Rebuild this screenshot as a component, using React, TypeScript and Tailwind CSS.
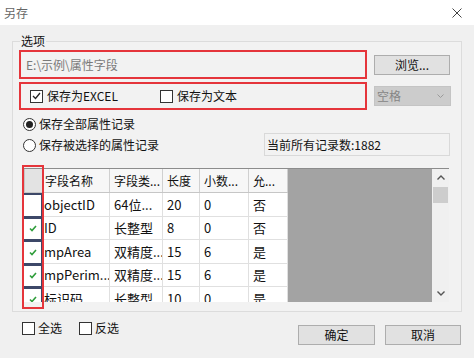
import React from "react";

const font = { fontFamily: '"Noto Sans CJK SC", "Noto Sans", sans-serif' };

const rows = [
  { sel: false, name: "objectID", type: "64位...", len: "20", dec: "0", allow: "否" },
  { sel: true, name: "ID", type: "长整型", len: "8", dec: "0", allow: "否" },
  { sel: true, name: "mpArea", type: "双精度...", len: "15", dec: "6", allow: "是" },
  { sel: true, name: "mpPerim...", type: "双精度...", len: "15", dec: "6", allow: "是" },
  { sel: true, name: "标识码", type: "长整型", len: "10", dec: "0", allow: "是" }
];

const CheckBox = ({ checked }: { checked?: boolean }) => (
  <span className="w-[13px] h-[13px] border border-[#333333] bg-white flex items-center justify-center shrink-0">
    {checked && (
      <svg width="9" height="8" viewBox="0 0 9 8">
        <path d="M1 4 L3.5 6.5 L8 1" fill="none" stroke="#222" strokeWidth="1.3" />
      </svg>
    )}
  </span>
);

const Radio = ({ on }: { on?: boolean }) => (
  <span className="w-[13px] h-[13px] rounded-full border border-[#333333] bg-white flex items-center justify-center shrink-0">
    {on && <span className="w-[7px] h-[7px] rounded-full bg-[#222222]" />}
  </span>
);

const GreenTick = () => (
  <svg width="8" height="7" viewBox="0 0 8 7">
    <path d="M1 3.5 L3 5.5 L7 1" fill="none" stroke="#2e9d3a" strokeWidth="1.6" />
  </svg>
);

const cols = ["w-[67px]", "w-[53px]", "w-[37px]", "w-[49px]", "w-[39px]"];

export default function App() {
  return (
    <div className="w-[474px] h-[358px] bg-[#f0f0f0] overflow-hidden text-[12px] text-[#111]" style={font}>
      {/* title bar */}
      <div className="h-[25px] bg-white flex items-center justify-between pl-[4px] pr-[12px]">
        <span className="text-[#666666] text-[12px]">另存</span>
        <svg width="10" height="10" viewBox="0 0 10 10">
          <path d="M0.5 0.5 L9.5 9.5 M9.5 0.5 L0.5 9.5" stroke="#444" strokeWidth="1" />
        </svg>
      </div>

      <fieldset className="mt-[9px] ml-[12px] w-[450px] h-[278px] border border-[#dcdcdc] bg-[#f2f2f2]">
        <legend className="ml-[7px] px-[1px] leading-[14px] text-[12px]">选项</legend>

        {/* path row */}
        <div className="flex items-center mt-[2px] ml-[6px]">
          <div className="w-[348px] h-[29px] border-2 border-[#e5353b] flex items-center pl-[5px] text-[#7a7a7a]">
            E:\示例\属性字段
          </div>
          <div className="ml-[7px] w-[76px] h-[20px] bg-[#e1e1e1] border border-[#adadad] flex items-center justify-center">
            浏览...
          </div>
        </div>

        {/* format row */}
        <div className="flex items-center mt-[3px] ml-[6px]">
          <div className="w-[348px] h-[28px] border-2 border-[#e5353b] flex items-center pl-[9px]">
            <label className="flex items-center gap-[4px] w-[130px]">
              <CheckBox checked />
              <span>保存为EXCEL</span>
            </label>
            <label className="flex items-center gap-[4px]">
              <CheckBox />
              <span>保存为文本</span>
            </label>
          </div>
          <div className="ml-[7px] w-[77px] h-[20px] bg-[#cccccc] border border-[#c4c4c4] flex items-center justify-between pl-[2px] pr-[6px] text-[#858585]">
            <span>空格</span>
            <svg width="7" height="4" viewBox="0 0 7 4">
              <path d="M0.5 0.5 L3.5 3.5 L6.5 0.5" fill="none" stroke="#9a9a9a" strokeWidth="1" />
            </svg>
          </div>
        </div>

        {/* radios and count */}
        <div className="flex mt-[4px]">
          <div className="flex flex-col gap-[1px] ml-[10px]">
            <label className="h-[20px] flex items-center gap-[3px]">
              <Radio on />
              <span>保存全部属性记录</span>
            </label>
            <label className="h-[20px] flex items-center gap-[3px]">
              <Radio />
              <span>保存被选择的属性记录</span>
            </label>
          </div>
          <div className="ml-auto mr-[11px] mt-[19px] w-[186px] h-[23px] border border-[#d9d9d9] flex items-center pl-[2px]">
            当前所有记录数:1882
          </div>
        </div>

        {/* table */}
        <div className="relative mt-[12px] ml-[11px] w-[425px]">
          <div className="w-[425px] h-[134px] flex border-t border-[#8c8c8c] overflow-hidden">
            <div className="flex flex-col bg-white">
              <div className="flex h-[24px] shrink-0 bg-[#f7f7f7] border-b border-[#c6c6c6]">
                <div className="w-[19px] bg-[#e3e3e3] border-r border-[#c6c6c6] border-l border-l-[#c6c6c6]" />
                {["字段名称", "字段类...", "长度", "小数...", "允..."].map((h, i) => (
                  <div key={h} className={`${cols[i]} border-r border-[#d0d0d0] flex items-center ${i === 0 ? "pl-[2px]" : "pl-[4px]"}`}>
                    {h}
                  </div>
                ))}
              </div>
              {rows.map((r) => (
                <div key={r.name} className="flex h-[23.5px] shrink-0">
                  <div className="w-[19px] bg-white border-t-2 border-b border-r-2 border-[#3d4868] flex items-center pl-[5px]">
                    {r.sel && <GreenTick />}
                  </div>
                  {[r.name, r.type, r.len, r.dec, r.allow].map((v, i) => (
                    <div
                      key={i}
                      className={`${cols[i]} border-r border-b border-[#e0e0e0] flex items-center overflow-hidden whitespace-nowrap text-[13px] ${i === 0 ? "pl-[1px]" : "pl-[4px]"}`}
                    >
                      {v}
                    </div>
                  ))}
                </div>
              ))}
            </div>
            <div className="w-[144px] bg-[#a3a3a3]" />
            <div className="w-[17px] bg-[#f0f0f0] flex flex-col items-center">
              <div className="h-[17px] flex items-center justify-center">
                <svg width="8" height="5" viewBox="0 0 8 5">
                  <path d="M0.5 4.5 L4 1 L7.5 4.5" fill="none" stroke="#555" strokeWidth="1.4" />
                </svg>
              </div>
              <div className="w-[15px] h-[16px] mt-[1px] bg-[#cdcdcd]" />
              <div className="mt-auto h-[17px] flex items-center justify-center">
                <svg width="8" height="5" viewBox="0 0 8 5">
                  <path d="M0.5 0.5 L4 4 L7.5 0.5" fill="none" stroke="#555" strokeWidth="1.4" />
                </svg>
              </div>
            </div>
          </div>
          <div className="absolute left-[-2px] top-[-3px] w-[22px] h-[144px] border-2 border-[#e5353b] pointer-events-none" />
        </div>
      </fieldset>

      {/* bottom */}
      <div className="flex items-start">
        <div className="flex items-center mt-[7px] ml-[22px] gap-[17px]">
          <label className="flex items-center gap-[3px]">
            <CheckBox />
            <span>全选</span>
          </label>
          <label className="flex items-center gap-[3px]">
            <CheckBox />
            <span>反选</span>
          </label>
        </div>
        <div className="ml-auto mr-[13px] mt-[13px] flex gap-[10px]">
          <div className="w-[77px] h-[20px] bg-[#e1e1e1] border border-[#adadad] flex items-center justify-center">确定</div>
          <div className="w-[76px] h-[20px] bg-[#e1e1e1] border border-[#adadad] flex items-center justify-center">取消</div>
        </div>
      </div>
    </div>
  );
}
